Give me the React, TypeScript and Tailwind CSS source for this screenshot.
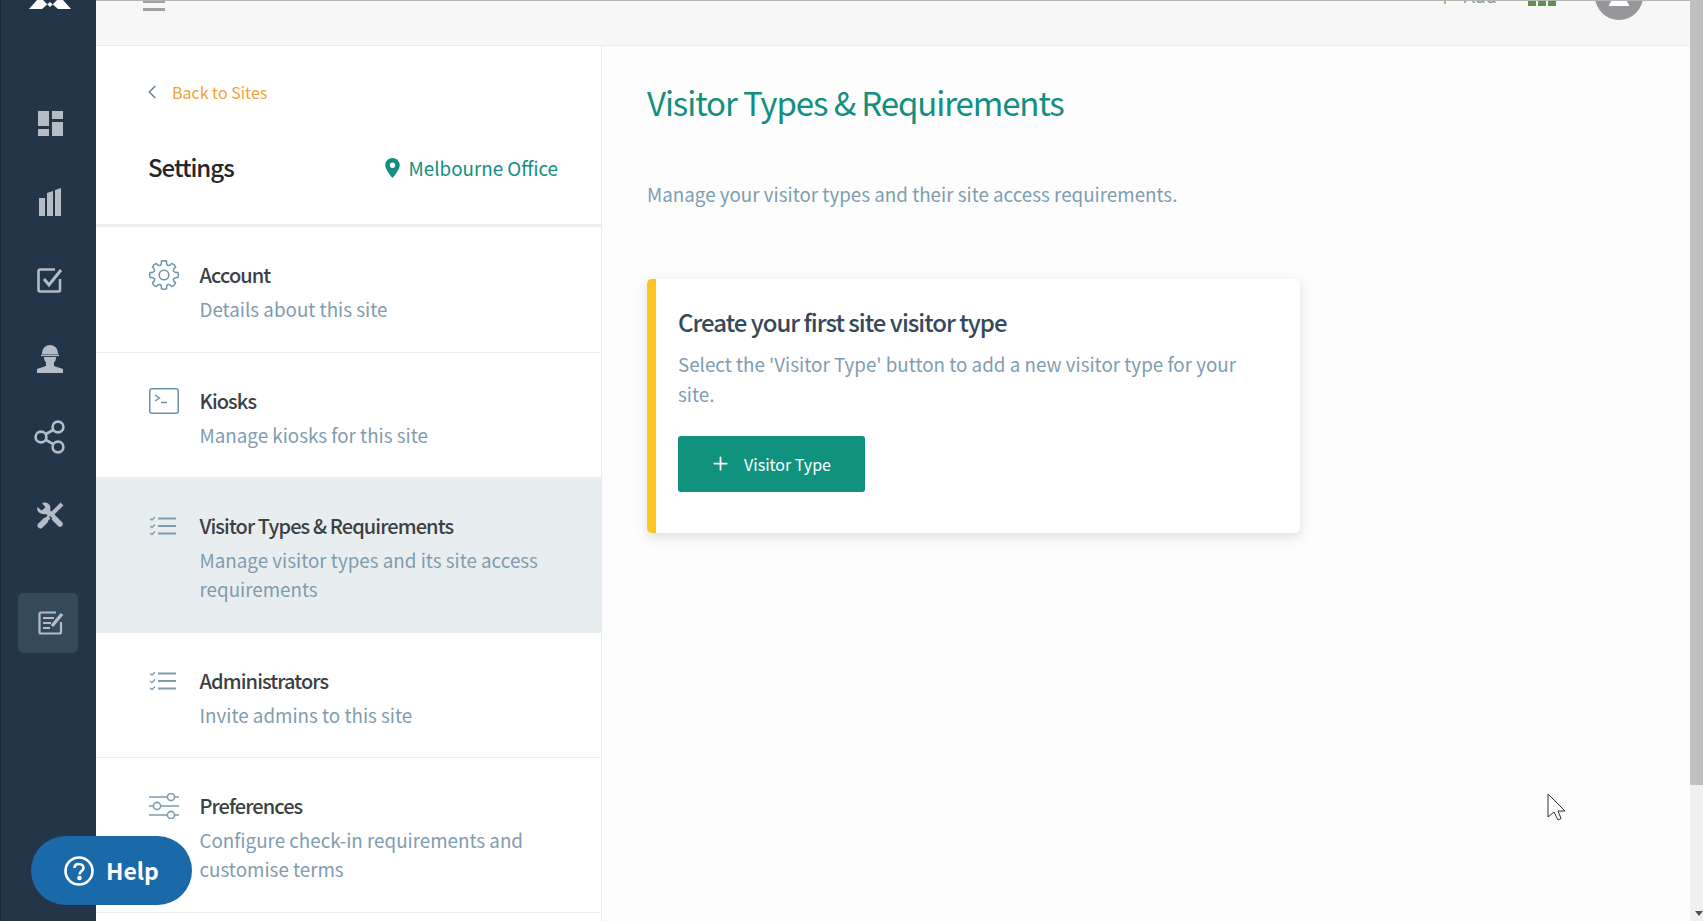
import React from "react";
import { ChevronLeft, Plus } from "lucide-react";

const Dashboard = () => (
  <svg width="25" height="25" viewBox="0 0 25 25" fill="#b4bcc5">
    <rect x="0" y="0" width="11" height="15" />
    <rect x="14" y="0" width="11" height="8" />
    <rect x="0" y="18" width="11" height="7" />
    <rect x="14" y="11" width="11" height="14" />
  </svg>
);

const Bars = () => (
  <svg width="22" height="28" viewBox="0 0 22 28" fill="#b4bcc5">
    <rect x="0" y="10" width="6" height="18" />
    <path d="M8 5 L14 3 V28 H8 Z" />
    <path d="M16 2 L22 0 V28 H16 Z" />
  </svg>
);

const CheckBox = () => (
  <svg width="26" height="25" viewBox="0 0 26 25" fill="none" stroke="#b4bcc5" strokeWidth="2.6">
    <path d="M23 11 V22 a1.5 1.5 0 0 1 -1.5 1.5 H3 a1.5 1.5 0 0 1 -1.5 -1.5 V3 a1.5 1.5 0 0 1 1.5 -1.5 H18" />
    <path d="M7 11 L12 17 L24 2" strokeWidth="3" />
  </svg>
);

const Worker = () => (
  <svg width="28" height="28" viewBox="0 0 28 28" fill="#b4bcc5">
    <path d="M6 9 C6 3 10 0 14 0 C18 0 22 3 22 9 Z" />
    <rect x="5" y="9.5" width="18" height="1.6" />
    <path d="M8 12 H20 C20 16 18 19 14 19 C10 19 8 16 8 12 Z" />
    <path d="M10 18 L10 21 L1 24 V28 H27 V24 L18 21 L18 18 Z" />
  </svg>
);

const Share = () => (
  <svg width="32" height="34" viewBox="0 0 32 34" fill="none" stroke="#b4bcc5" strokeWidth="2.6">
    <circle cx="24" cy="7" r="5.4" />
    <circle cx="7" cy="17" r="5.4" />
    <circle cx="24" cy="27" r="5.4" />
    <path d="M12 14 L19 10 M12 20 L19 24" />
  </svg>
);

const Tools = () => (
  <svg width="27" height="27" viewBox="0 0 27 27" fill="none" stroke="#b4bcc5">
    <path d="M0.5 5 L4.5 8.5 L8.5 5.5 L5 1 C10 -1 15 3 13 8 L9 12 C4 13 -1 10 0.5 5 Z" fill="#b4bcc5" stroke="none" />
    <path d="M10 9 L23 22" strokeWidth="5.5" strokeLinecap="round" />
    <path d="M25 2 L7 20" strokeWidth="4" />
    <path d="M8 19 L3.5 23.5" strokeWidth="6" strokeLinecap="round" />
    <path d="M12.5 14.5 L15 17" stroke="#233649" strokeWidth="1.4" />
  </svg>
);

const Note = () => (
  <svg width="26" height="24" viewBox="0 0 26 24" fill="none" stroke="#b4bcc5" strokeWidth="2.2">
    <path d="M23 11 V21 a1.5 1.5 0 0 1 -1.5 1.5 H3 a1.5 1.5 0 0 1 -1.5 -1.5 V3 a1.5 1.5 0 0 1 1.5 -1.5 H18" />
    <path d="M5 7 H16 M5 12 H13 M5 17 H12" />
    <path d="M14 15 L24 3" strokeWidth="3.4" />
  </svg>
);

// rounded cog outline, eight lobes
const gearPath = () => {
  const pts: string[] = [];
  for (let k = 0; k < 8; k++) {
    const a = (k * Math.PI) / 4 - Math.PI / 8;
    const p = (r: number, d: number) => `${(15 + r * Math.cos(a + d)).toFixed(2)} ${(15 + r * Math.sin(a + d)).toFixed(2)}`;
    pts.push(`${k === 0 ? "M" : "L"}${p(10.2, 0)} Q${p(11, 0.2)} ${p(14, 0.2)} Q${p(15, 0.39)} ${p(14, 0.58)} Q${p(11, 0.58)} ${p(10.2, 0.785)}`);
  }
  return pts.join(" ") + " Z";
};

const Gear = () => (
  <svg width="30" height="30" viewBox="0 0 30 30" fill="none" stroke="#6d93ab" strokeWidth="1.5" strokeLinejoin="round">
    <circle cx="15" cy="15" r="4.8" />
    <path d={gearPath()} />
  </svg>
);

const Terminal = () => (
  <svg width="30" height="26" viewBox="0 0 30 26" fill="none" stroke="#6d93ab">
    <rect x="0.75" y="0.75" width="28.5" height="24.5" rx="2" strokeWidth="1.5" />
    <path d="M6 7 L10.5 10 L6 13 M12 14.5 H18" strokeWidth="1.4" />
  </svg>
);

const Checklist = () => (
  <svg width="28" height="20" viewBox="0 0 28 20" fill="none" stroke="#7f9cb0" strokeWidth="1.8">
    <path d="M9 2.5 H27 M9 10 H27 M9 17.5 H27" />
    <path d="M1 2.5 L3 4 L6 1 M1 10 L3 11.5 L6 8.5 M1 17 L3 18.5 L6 15.5" strokeWidth="1.4" />
  </svg>
);

const Sliders = () => (
  <svg width="30" height="26" viewBox="0 0 30 26" fill="none" stroke="#7f9cb0" strokeWidth="1.6">
    <path d="M0 4 H18 M26 4 H30 M0 13 H4 M12 13 H30 M0 22 H18 M26 22 H30" />
    <circle cx="22" cy="4" r="3.6" />
    <circle cx="8" cy="13" r="3.6" />
    <circle cx="22" cy="22" r="3.6" />
  </svg>
);

const rail = [<Dashboard />, <Bars />, <CheckBox />, <Worker />, <Share />, <Tools />];

type RowProps = {
  icon: React.ReactNode;
  title: string;
  sub: React.ReactNode;
  h: string;
  active?: boolean;
};

const Row = ({ icon, title, sub, h, active }: RowProps) => (
  <div className={`flex shrink-0 pl-[53px] pr-[40px] pt-[33px] border-b border-[#ececec] ${h} ${active ? "bg-[#e8eeef]" : ""}`}>
    <div className="w-[50.5px] shrink-0 h-[30px] flex items-center">{icon}</div>
    <div>
      <div className="text-[20px] leading-[30px] text-[#3a4045] tracking-[-0.9px] font-medium">{title}</div>
      <div className="text-[18.8px] leading-[29px] mt-[4px] text-[#7f9cb0]">{sub}</div>
    </div>
  </div>
);

export default function App() {
  return (
    <div className="relative flex h-screen w-full overflow-hidden bg-[#fdfdfd] font-['Noto_Sans_CJK_SC',sans-serif]">
      <div className="w-[96px] shrink-0 bg-[#233649] border-l border-[#1a2a38] flex flex-col items-center">
        <svg width="42" height="9" viewBox="0 0 42 9" fill="#fff" className="ml-[2px]">
          <path d="M0 9 L8 0 H14 L21 7 L28 0 H34 L42 9 H29 L21 2 L13 9 Z" />
        </svg>
        <div className="flex flex-col items-center mt-[75px] w-full pl-[3px]">
          {rail.map((icon, i) => (
            <div key={i} className="h-[78.5px] flex items-center justify-center">
              {icon}
            </div>
          ))}
        </div>
        <div className="mt-[38px] -ml-[1px] w-[60px] h-[60px] rounded-[5px] bg-[#34495a] flex items-center justify-center pl-[6px]">
          <Note />
        </div>
      </div>

      <div className="flex-1 flex flex-col min-w-0">
        <div className="h-[46px] shrink-0 bg-[#f7f7f7] border-t border-[#b5b5b5] border-b border-b-[#ececec] flex items-start overflow-hidden pl-[47px]">
          <div className="flex flex-col gap-[5px] -mt-[1px] w-[22px]">
            <div className="h-[3px] bg-[#a0a0a0]" />
            <div className="h-[3px] bg-[#a0a0a0]" />
          </div>
          <div className="ml-auto flex items-start pr-[47px]">
            <div className="w-[2px] h-[3px] bg-[#c9b13a] mr-[18px]" />
            <span className="text-[18px] leading-[18px] -mt-[15px] text-[#7f9cb0]">Add</span>
            <div className="ml-[31px] flex gap-[2px] -mt-[1px]">
              <div className="w-[8px] h-[6px] bg-[#5f8f4e]" />
              <div className="w-[8px] h-[6px] bg-[#5f8f4e]" />
              <div className="w-[8px] h-[6px] bg-[#5f8f4e]" />
            </div>
            <div className="ml-[39px] w-[48px] h-[48px] rounded-full bg-[#98969a] -mt-[29px] flex items-end justify-center overflow-hidden">
              <div className="w-[21px] h-[6px] mb-[14px] bg-white [clip-path:polygon(15%_0,85%_0,100%_100%,0_100%)]" />
            </div>
          </div>
        </div>

        <div className="flex flex-1 min-h-0">
          <div className="w-[506px] shrink-0 border-r border-[#ececec] bg-white flex flex-col overflow-hidden">
            <div className="h-[181px] shrink-0 border-b-[3px] border-[#ececec] pl-[52px] pr-[43px] pt-[31px]">
              <div className="flex items-center h-[30px] text-[16px] text-[#f0a33c]">
                <ChevronLeft size={22} strokeWidth={1.8} className="text-[#6d8496] -ml-[7px] mr-[9px]" />
                Back to Sites
              </div>
              <div className="flex items-center justify-between mt-[44px]">
                <span className="text-[24px] leading-[36px] -mt-[2px] text-[#23272b] tracking-[-1px] font-medium">Settings</span>
                <span className="flex items-center text-[18.8px] leading-[30px] text-[#138f80]">
                  <svg width="15" height="20" viewBox="0 0 16 22" className="mr-[9px]" fill="#138f80">
                    <path fillRule="evenodd" d="M8 0 C3.6 0 0 3.5 0 8 C0 13 8 22 8 22 C8 22 16 13 16 8 C16 3.5 12.4 0 8 0 Z M8 5 A3 3 0 1 1 8 11 A3 3 0 1 1 8 5 Z" />
                  </svg>
                  Melbourne Office
                </span>
              </div>
            </div>
            <Row icon={<Gear />} title="Account" sub="Details about this site" h="h-[126px]" />
            <Row icon={<Terminal />} title="Kiosks" sub="Manage kiosks for this site" h="h-[125px]" />
            <Row
              icon={<Checklist />}
              title="Visitor Types & Requirements"
              sub={<>Manage visitor types and its site access<br />requirements</>}
              h="h-[155px]"
              active
            />
            <Row icon={<Checklist />} title="Administrators" sub="Invite admins to this site" h="h-[125px]" />
            <Row
              icon={<Sliders />}
              title="Preferences"
              sub={<>Configure check-in requirements and<br />customise terms</>}
              h="h-[155px]"
            />
          </div>

          <div className="flex-1 pl-[45px] pt-[31px]">
            <h1 className="text-[33px] leading-[50px] text-[#138f80] tracking-[-1.1px]">Visitor Types &amp; Requirements</h1>
            <p className="mt-[52px] text-[18.8px] leading-[30px] text-[#7f9cb0]">
              Manage your visitor types and their site access requirements.
            </p>
            <div className="mt-[70px] w-[653px] h-[254px] bg-white rounded-[5px] border-l-[9px] border-[#fcc521] shadow-[0_4px_12px_rgba(40,60,70,0.16)] pl-[22px] pt-[24px]">
              <div className="text-[24px] leading-[38px] text-[#36495a] tracking-[-1px] font-medium">
                Create your first site visitor type
              </div>
              <div className="mt-[8px] w-[590px] text-[18.8px] leading-[29.5px] text-[#7f9cb0]">
                Select the 'Visitor Type' button to add a new visitor type for your site.
              </div>
              <div className="mt-[28px] w-[187px] h-[56px] pr-[2px] rounded-[3px] bg-[#10927f] flex items-center justify-center text-white text-[16px]">
                <Plus size={21} strokeWidth={2} className="mr-[13px] -mt-[2px]" />
                Visitor Type
              </div>
            </div>
          </div>
        </div>
      </div>

      <div className="w-[13px] shrink-0 bg-[#f0f0f0] flex flex-col justify-between">
        <div className="h-[785px] bg-[#c0c0c0]" />
        <div className="w-0 h-0 mb-[5px] ml-[5px] border-l-[4px] border-r-[4px] border-t-[5px] border-l-transparent border-r-transparent border-t-[#505050]" />
      </div>

      <div className="absolute left-[31px] top-[836px] w-[161px] h-[69px] rounded-full bg-[#1a69a8] flex items-center pl-[33px] text-white">
        <svg width="30" height="30" viewBox="0 0 30 30" fill="none" stroke="#fff" strokeWidth="2.6">
          <circle cx="15" cy="15" r="13.5" />
          <path d="M10.5 12 C10.5 9 13 8 15 8 C18 8 19.5 10 19.5 12 C19.5 15 15.5 15 15.5 18.5" />
          <circle cx="15.5" cy="22" r="1" fill="#fff" />
        </svg>
        <span className="ml-[12px] text-[23px] font-bold leading-none">Help</span>
      </div>

      <svg className="absolute left-[1547px] top-[793px]" width="19" height="28" viewBox="0 0 19 28" fill="#fff" stroke="#333" strokeWidth="1">
        <path d="M1 1 V24 L7 19 L11 27 L14 25.5 L11 18 L18 18 Z" />
      </svg>
    </div>
  );
}
